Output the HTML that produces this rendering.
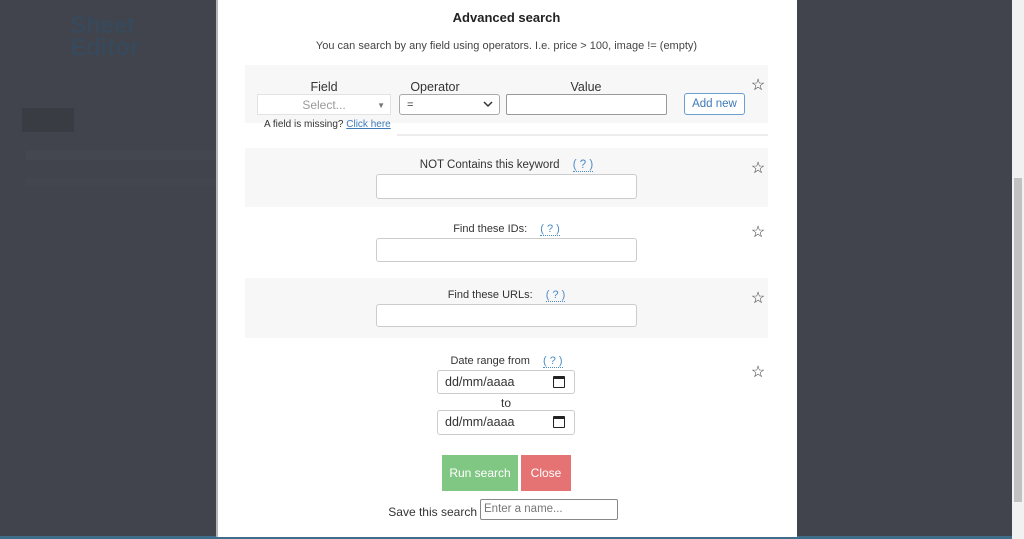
<!DOCTYPE html>
<html><head><meta charset="utf-8"><style>
*{box-sizing:border-box;margin:0;padding:0}
body{width:1024px;height:539px;overflow:hidden;background:#41444c;font-family:"Liberation Sans",sans-serif;position:relative;color:#333}
.a{position:absolute}
.bg{background:#f7f7f7}
.lbl{font-size:11px;color:#333;text-align:center}
.q{color:#4a8bc8;border-bottom:1px dotted #4a8bc8;margin-left:10px}
.inp{background:#fff;border:1px solid #ccc;border-radius:3px}
.star{font-size:16px;color:#333;width:16px;text-align:center;line-height:16px}
</style></head><body>
<div class="a" style="left:70px;top:15px;font-size:24px;font-weight:bold;color:#37495a;line-height:22px">Sheet<br>Editor</div>
<div class="a" style="left:22px;top:108px;width:52px;height:24px;background:#393c43"></div>
<div class="a" style="left:26px;top:150px;width:190px;height:10px;background:#44474f"></div>
<div class="a" style="left:26px;top:178px;width:190px;height:8px;background:#43464e"></div>
<!-- scrollbar -->
<div class="a" style="left:1012px;top:0;width:12px;height:539px;background:#f1f1f1"></div>
<div class="a" style="left:1014px;top:178px;width:8px;height:324px;background:#c1c1c1"></div>
<div class="a" style="left:0;top:536px;width:1012px;height:3px;background:#3d6e8a"></div>

<!-- modal -->
<div class="a" style="left:216px;top:0;width:581px;height:537px;background:#fff;border-left:2px solid #b5b5b5"></div>
<div class="a" style="left:216px;top:10px;width:581px;text-align:center;font-size:13px;font-weight:bold;color:#222">Advanced search</div>
<div class="a" style="left:216px;top:40px;width:581px;text-align:center;font-size:11px;color:#444">You can search by any field using operators. I.e. price &gt; 100, image != (empty)</div>

<div class="a bg" style="left:245px;top:65px;width:523px;height:58px"></div>
<div class="a" style="left:397px;top:134px;width:371px;height:2px;background:#ececec"></div>
<div class="a lbl" style="left:284px;top:80px;width:80px;font-size:12.5px">Field</div>
<div class="a lbl" style="left:395px;top:80px;width:80px;font-size:12.5px">Operator</div>
<div class="a lbl" style="left:546px;top:80px;width:80px;font-size:12.5px">Value</div>
<div class="a" style="left:257px;top:94px;width:134px;height:21px;background:#fff;border:1px solid #e3e3e3;font-size:12px;color:#999;text-align:center;line-height:20px">Select...<span style="position:absolute;right:5px;top:1px;font-size:8px;color:#777">▼</span></div>
<div class="a inp" style="left:399px;top:94px;width:101px;height:21px;border-color:#aaa;font-size:11px;line-height:20px;padding-left:7px">=<svg style="position:absolute;right:6px;top:6px" width="10" height="7" viewBox="0 0 10 7"><path d="M1 1l4 4 4-4" fill="none" stroke="#333" stroke-width="1.5"/></svg></div>
<div class="a" style="left:506px;top:94px;width:161px;height:21px;background:#fff;border:1px solid #999;border-radius:2px"></div>
<div class="a" style="left:684px;top:93px;width:61px;height:22px;border:1px solid #6c9fcf;border-radius:3px;color:#3d7ab8;font-size:11.5px;text-align:center;line-height:20px;background:#fff">Add new</div>
<div class="a" style="left:264px;top:119px;font-size:10px;color:#333">A field is missing? <span style="color:#3d7ab8;text-decoration:underline">Click here</span></div>

<div class="a bg" style="left:245px;top:148px;width:523px;height:59px"></div>
<div class="a lbl" style="left:376px;top:159px;width:261px;font-size:11.5px">NOT Contains this keyword <span class="q">( ? )</span></div>
<div class="a inp" style="left:376px;top:174px;width:261px;height:25px"></div>

<div class="a lbl" style="left:376px;top:223px;width:261px;font-size:11px">Find these IDs: <span class="q">( ? )</span></div>
<div class="a inp" style="left:376px;top:238px;width:261px;height:24px"></div>

<div class="a bg" style="left:245px;top:278px;width:523px;height:60px"></div>
<div class="a lbl" style="left:376px;top:289px;width:261px;font-size:11px">Find these URLs: <span class="q">( ? )</span></div>
<div class="a inp" style="left:376px;top:304px;width:261px;height:23px"></div>

<div class="a lbl" style="left:376px;top:355px;width:261px;font-size:11px">Date range from <span class="q">( ? )</span></div>
<div class="a inp" style="left:437px;top:370px;width:138px;height:24px;font-size:12.5px;line-height:22px;padding-left:7px;color:#333">dd/mm/aaaa<span style="position:absolute;right:9px;top:5px;width:12px;height:12px;border:1.5px solid #222;border-top-width:3px;border-radius:1px"></span></div>
<div class="a lbl" style="left:476px;top:396px;width:60px;font-size:12px">to</div>
<div class="a inp" style="left:437px;top:410px;width:138px;height:25px;font-size:12.5px;line-height:23px;padding-left:7px;color:#333">dd/mm/aaaa<span style="position:absolute;right:9px;top:5px;width:12px;height:12px;border:1.5px solid #222;border-top-width:3px;border-radius:1px"></span></div>

<div class="a" style="left:442px;top:455px;width:76px;height:36px;background:#80c784;color:#fff;font-size:12px;text-align:center;line-height:36px">Run search</div>
<div class="a" style="left:521px;top:455px;width:50px;height:36px;background:#e57373;color:#fff;font-size:12px;text-align:center;line-height:36px">Close</div>
<div class="a" style="left:380px;top:505px;width:97px;text-align:right;font-size:12px;color:#333">Save this search</div>
<div class="a" style="left:480px;top:499px;width:138px;height:21px;border:1px solid #888;border-radius:2px;font-size:11.5px;color:#777;padding-left:3px;line-height:19px">Enter a name...</div>

<div class="a star" style="left:750px;top:78px">☆</div>
<div class="a star" style="left:750px;top:161px">☆</div>
<div class="a star" style="left:750px;top:225px">☆</div>
<div class="a star" style="left:750px;top:291px">☆</div>
<div class="a star" style="left:750px;top:365px">☆</div>
</body></html>
